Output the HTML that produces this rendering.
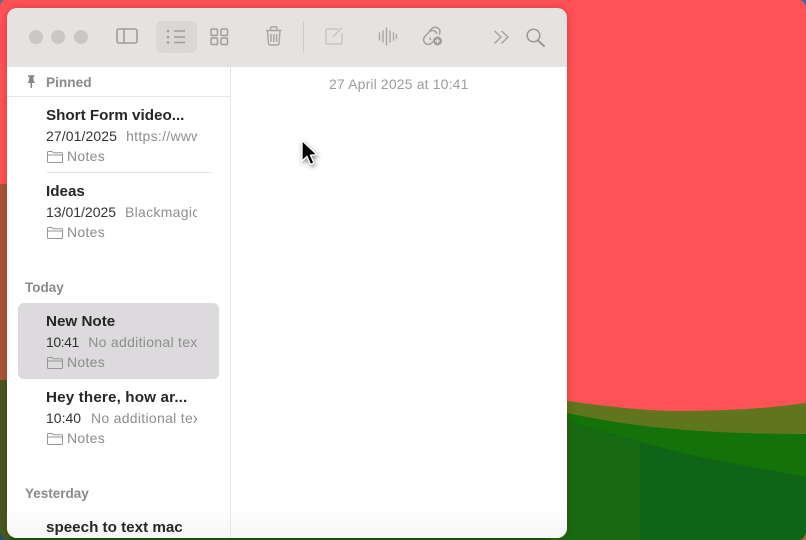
<!DOCTYPE html>
<html>
<head>
<meta charset="utf-8">
<style>
html,body{margin:0;padding:0;width:806px;height:540px;overflow:hidden;background:#ff5257;font-family:"Liberation Sans",sans-serif;}
.a{position:absolute;white-space:nowrap;}
#win{position:absolute;left:7px;top:8px;width:560px;height:530px;border-radius:10px;overflow:hidden;background:#fff;box-shadow:0 0 9px rgba(110,0,0,.28);}
#bar{position:absolute;left:0;top:0;width:560px;height:59px;background:#e6e2e1;}
.title{font-size:15.2px;font-weight:bold;color:#262626;left:46px;}
.meta{font-size:14px;color:#333;left:46px;width:151px;overflow:hidden;letter-spacing:.1px;}
.meta span{color:#8e8e8e;margin-left:5px;letter-spacing:.3px;}
.meta.t{letter-spacing:-.45px;}
.folder{font-size:14px;color:#8c8c8c;left:67px;letter-spacing:.3px;}
.head{font-size:13.5px;font-weight:bold;color:#8a8a8a;left:25px;}
svg{position:absolute;overflow:visible;}
</style>
</head>
<body>
<svg style="left:0;top:0" width="806" height="540" viewBox="0 0 806 540">
<rect x="0" y="0" width="806" height="540" fill="#ff5257"/>
<rect x="0" y="184" width="10" height="196" fill="#a65634"/>
<rect x="0" y="380" width="20" height="160" fill="#45591f"/>
<path d="M567 401 C620 408 650 411 680 411 C730 411 770 408 806 403 L806 540 L567 540 Z" fill="#5f761c"/>
<path d="M567 413 C620 424 680 434 806 434 L806 540 L567 540 Z" fill="#137209"/>
<path d="M567 420 C610 434 660 448 700 457 C740 465 775 471 806 477 L806 540 L567 540 Z" fill="#0f6418"/>
<path d="M567 420 C590 428 610 434 640 443 L640 540 L567 540 Z" fill="#186a12"/>
<rect x="10" y="536" width="560" height="4" fill="#0f5a12"/>
<rect x="550" y="520" width="20" height="20" fill="#186a12"/>
<path d="M800 0 L806 0 L806 6 Q804 1 800 0 Z" fill="#2a6fb0"/>
<path d="M0 0 L5 0 Q1 1 0 6 Z" fill="#5b6f86"/>
<path d="M800 540 L806 540 L806 533 Q804 539 800 540 Z" fill="#b5683c"/>
<path d="M0 533 L0 540 L7 540 Q2 539 0 533 Z" fill="#1b4f7a"/>
</svg>

<div id="win">
<div id="bar"></div>
<div class="a" style="left:0;top:497px;width:560px;height:33px;background:linear-gradient(#fff,#f6f6f6)"></div>
<div class="a" style="left:223px;top:59px;width:1px;height:471px;background:#e6e6e6"></div>
<div class="a" style="left:0;top:88px;width:223px;height:1px;background:#e6e6e6"></div>
<div class="a" style="left:39px;top:164px;width:166px;height:1px;background:#e6e6e6"></div>
<div class="a" style="left:11px;top:295px;width:201px;height:76px;background:#dcdadc;border-radius:6px"></div>
</div>

<svg style="left:0;top:0" width="806" height="540" viewBox="0 0 806 540" fill="none">
<g style="filter:blur(.3px)">
<circle cx="36" cy="37" r="7" fill="#cbc7c6"/>
<circle cx="58" cy="37" r="7" fill="#cbc7c6"/>
<circle cx="81" cy="37" r="7" fill="#cbc7c6"/>
<!-- sidebar -->
<rect x="117" y="29" width="20" height="14" rx="2" stroke="#a09d9c" stroke-width="1.6"/>
<line x1="124" y1="29" x2="124" y2="43" stroke="#a09d9c" stroke-width="1.6"/>
<!-- list -->
<rect x="156" y="21" width="41" height="32" rx="6" fill="#dbd7d6"/>
<path d="M174 31h11M174 37h11M174 42.500h11" stroke="#a09d9c" stroke-width="1.600"/>
<circle cx="168" cy="31" r="1.300" fill="#a09d9c"/><circle cx="168" cy="37" r="1.300" fill="#a09d9c"/><circle cx="168" cy="42.500" r="1.300" fill="#a09d9c"/>
<!-- grid -->
<g stroke="#a09d9c" stroke-width="1.500">
<rect x="211" y="29" width="6.500" height="6.500" rx="1.200"/><rect x="221" y="29" width="6.500" height="6.500" rx="1.200"/>
<rect x="211" y="38" width="6.500" height="6.500" rx="1.200"/><rect x="221" y="38" width="6.500" height="6.500" rx="1.200"/>
</g>
<!-- trash -->
<path d="M266 30.500h15.500M270.500 30.500v-2.200q0-1.500 1.500-1.500h3.500q1.500 0 1.500 1.500v2.200M267.500 30.500l1 13q.1 1.500 1.600 1.500h7.300q1.500 0 1.600-1.500l1-13M271 34v8M273.800 34v8M276.600 34v8" stroke="#a8a5a4" stroke-width="1.400"/>
<line x1="303.500" y1="21" x2="303.500" y2="52" stroke="#cfcbca" stroke-width="1"/>
<!-- compose -->
<path d="M338 29h-10.500q-1.500 0-1.500 1.500v12q0 1.500 1.500 1.500h13q1.500 0 1.500-1.500v-9" stroke="#c6c3c2" stroke-width="1.400"/>
<path d="M333 37l9-9.500" stroke="#c6c3c2" stroke-width="1.400"/>
<!-- waveform -->
<path d="M379.500 33v7M383 31v11M386.500 28v17M390 31v11M393.500 33v7M396.500 34.500v4" stroke="#a9a6a5" stroke-width="1.400" stroke-linecap="round"/>
<!-- link plus -->
<path d="M429 31.500l3.500-3.500q3.500-1.800 6.300.8 2.300 2.700.4 5.700M433 41.500l-2 2q-3 2-5.800-.2-2.800-2.800-.8-6.300l5.400-5.600q3-2 5.800.2 1.200 1.200 1.400 2.400M429.500 37.500q.3 1.500 1.500 2.400" stroke="#a09d9c" stroke-width="1.400"/>
<circle cx="437.500" cy="41" r="4.500" fill="#9f9c9b"/>
<path d="M437.500 38.500v5M435 41h5" stroke="#e6e2e1" stroke-width="1.200"/>
<!-- chevrons -->
<path d="M494.500 31l6.500 6-6.500 6.500M501.500 31l6.500 6-6.500 6.500" stroke="#a3a09f" stroke-width="1.400"/>
<!-- search -->
<circle cx="533.500" cy="35.500" r="6.300" stroke="#9a9796" stroke-width="1.500"/>
<path d="M538 40.500l6 5.500" stroke="#9a9796" stroke-width="2" stroke-linecap="round"/>
<!-- pin -->
<path d="M28 76h6.500" stroke="#858585" stroke-width="1.500"/>
<path d="M31.300 83v5" stroke="#858585" stroke-width="1.500"/>
<path d="M29.300 76.500h4l.4 4.500 1.500 2h-7.800l1.500-2z" fill="#858585"/>
<!-- folders -->
<g stroke="#969696" stroke-width="1">
<path d="M47.500 157v-4.500q0-1 1-1h3.500l1.300 1.300h8.200q1 0 1 1v7.700q0 1-1 1h-13q-1 0-1-1zM47.500 155h14.900"/>
<path d="M47.500 233v-4.500q0-1 1-1h3.500l1.300 1.300h8.200q1 0 1 1v7.700q0 1-1 1h-13q-1 0-1-1zM47.500 231h14.900"/>
<path d="M47.500 363v-4.500q0-1 1-1h3.500l1.300 1.300h8.200q1 0 1 1v7.700q0 1-1 1h-13q-1 0-1-1zM47.500 361h14.900"/>
<path d="M47.500 439v-4.500q0-1 1-1h3.500l1.300 1.300h8.200q1 0 1 1v7.700q0 1-1 1h-13q-1 0-1-1zM47.500 437h14.900"/>
</g>
</g>
<!-- cursor -->
<path d="M302 140.500v20.500l5-4.500 3.500 8 3.500-1.500-3.500-7.800 6.500-.5z" fill="#000" stroke="#fff" stroke-width="1.300" style="filter:drop-shadow(1px 2px 2px rgba(0,0,0,.45))"/>
</svg>

<div class="a" style="left:46px;top:74.500px;font-size:13.7px;font-weight:bold;color:#8a8a8a">Pinned</div>
<div class="a" style="left:329px;top:76px;font-size:14px;color:#9c9c9c;letter-spacing:.15px">27 April 2025 at 10:41</div>

<div class="a title" style="top:107px">Short Form video...</div>
<div class="a meta" style="top:128px">27/01/2025 <span>https://www.youtube</span></div>
<div class="a folder" style="top:148px">Notes</div>

<div class="a title" style="top:183px">Ideas</div>
<div class="a meta" style="top:204px;letter-spacing:0">13/01/2025 <span style="margin-left:5px">Blackmagic Design</span></div>
<div class="a folder" style="top:224px">Notes</div>

<div class="a head" style="top:280px">Today</div>

<div class="a title" style="top:313px">New Note</div>
<div class="a meta t" style="top:334px">10:41 <span style="margin-left:6px">No additional text</span></div>
<div class="a folder" style="top:354px">Notes</div>

<div class="a title" style="top:389px;letter-spacing:.15px">Hey there, how ar...</div>
<div class="a meta" style="top:410px;letter-spacing:0">10:40 <span style="margin-left:6px">No additional text</span></div>
<div class="a folder" style="top:430px">Notes</div>

<div class="a head" style="top:486px">Yesterday</div>
<div class="a title" style="top:519px">speech to text mac</div>
</body>
</html>
